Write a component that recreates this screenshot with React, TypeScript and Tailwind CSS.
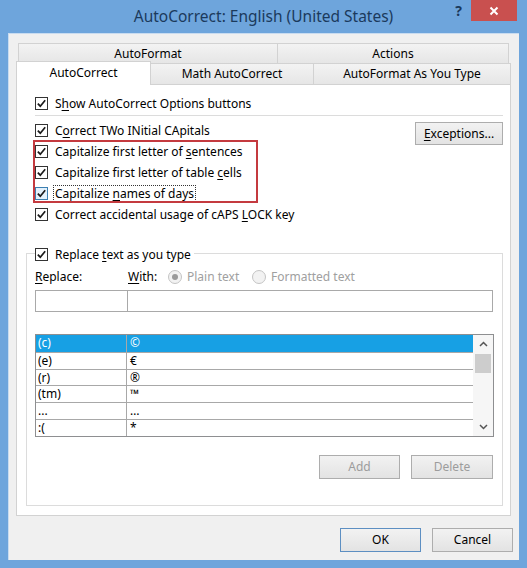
import type { ReactNode } from "react";

function Check({ hover = false }: { hover?: boolean }) {
  return (
    <span
      className={
        hover
          ? "flex h-[13px] w-[13px] shrink-0 items-center justify-center border border-[#3c7fb1] bg-[#e3f1fc]"
          : "flex h-[13px] w-[13px] shrink-0 items-center justify-center border border-[#333333] bg-white"
      }
    >
      <svg width="11" height="11" viewBox="0 0 11 11">
        <path d="M1.8 5.6 L4.3 8.2 L9.2 2.2" stroke="#1a1a1a" strokeWidth="1.7" fill="none" />
      </svg>
    </span>
  );
}

function Row({ children, hover = false }: { children: ReactNode; hover?: boolean }) {
  return (
    <div className="flex h-[21px] items-center gap-[7px]">
      <Check hover={hover} />
      <span className="leading-[16px]">{children}</span>
    </div>
  );
}

function Radio({ on = false }: { on?: boolean }) {
  return (
    <span className="flex h-[14px] w-[14px] shrink-0 items-center justify-center rounded-full border border-[#c4c4c4] bg-[#f2f2f2]">
      {on && <span className="h-[6px] w-[6px] rounded-full bg-[#9a9a9a]" />}
    </span>
  );
}

function Btn({
  children,
  w,
  disabled = false,
  primary = false,
}: {
  children: ReactNode;
  w: string;
  disabled?: boolean;
  primary?: boolean;
}) {
  return (
    <div
      className={[
        "flex items-center justify-center border bg-gradient-to-b from-[#f2f2f2] to-[#e3e3e3]",
        w,
        primary ? "border-[#5d8fc2]" : "border-[#adadad]",
        disabled ? "text-[#9c9c9c]" : "text-black",
      ].join(" ")}
    >
      {children}
    </div>
  );
}

const entries = [
  ["(c)", "©"],
  ["(e)", "€"],
  ["(r)", "®"],
  ["(tm)", "™"],
  ["...", "…"],
  [":(", "*"],
];

export default function App() {
  return (
    <div className="flex h-[568px] w-[527px] flex-col bg-[#6ea5dc] font-['Noto_Sans','Open_Sans',sans-serif] text-[12px] text-black">
      {/* title bar */}
      <div className="grid h-[33px] grid-cols-[1fr_auto_1fr]">
        <div />
        <div className="pt-[6px] text-[15.5px] leading-[21px] text-[#1b3a5c]">
          AutoCorrect: English (United States)
        </div>
        <div className="flex items-start justify-end pr-[10px]">
          <span className="mr-[9px] mt-[3px] text-[14px] font-bold leading-[16px] text-[#1b3a5c]">?</span>
          <div className="flex h-[21px] w-[46px] items-center justify-center bg-[#c9504f]">
            <svg width="10" height="10" viewBox="0 0 10 10">
              <path d="M1.5 1.5 L8.5 8.5 M8.5 1.5 L1.5 8.5" stroke="#fff" strokeWidth="2" />
            </svg>
          </div>
        </div>
      </div>

      {/* client area */}
      <div className="mx-[8px] flex h-[527px] flex-col bg-[#f0f0f0] px-[8px] pt-[10px] shadow-[inset_1px_1px_0_#c9dcf0]">
        {/* back tab row */}
        <div className="flex h-[20px] px-[2px]">
          <div className="flex w-[260px] items-center justify-center border border-b-0 border-[#d2d2d2] bg-gradient-to-b from-[#f3f3f3] to-[#e6e6e6]">
            AutoFormat
          </div>
          <div className="-ml-px flex flex-1 items-center justify-center border border-b-0 border-[#d2d2d2] bg-gradient-to-b from-[#f3f3f3] to-[#e6e6e6]">
            Actions
          </div>
        </div>
        {/* front tab row */}
        <div className="flex h-[21px] items-end">
          <div className="relative z-10 -mb-px flex h-[24px] w-[135px] items-center justify-center border border-b-0 border-[#d2d2d2] bg-white pb-[1px]">
            AutoCorrect
          </div>
          <div className="-ml-px flex h-[21px] w-[164px] items-center justify-center border border-b-0 border-[#d2d2d2] bg-gradient-to-b from-[#f3f3f3] to-[#e6e6e6]">
            Math AutoCorrect
          </div>
          <div className="-ml-px flex h-[21px] flex-1 items-center justify-center border border-b-0 border-[#d2d2d2] bg-gradient-to-b from-[#f3f3f3] to-[#e6e6e6]">
            AutoFormat As You Type
          </div>
        </div>

        {/* tab panel */}
        <div className="flex h-[432px] flex-col border border-[#d2d2d2] bg-white">
          <div className="pl-[18px] pt-[8px]">
            <Row>
              S<u className="underline-offset-2">h</u>ow AutoCorrect Options buttons
            </Row>
          </div>
          <div className="ml-[18px] mr-[7px] mt-[1px] h-px bg-[#dcdcdc]" />

          <div className="mt-[4px] flex pl-[18px] pr-[7px]">
            <div className="flex flex-1 flex-col">
              <Row>
                C<u className="underline-offset-2">o</u>rrect TWo INitial CApitals
              </Row>
              <div className="relative">
                <Row>
                  Capitalize first letter of <u className="underline-offset-2">s</u>entences
                </Row>
                <Row>
                  Capitalize first letter of table <u className="underline-offset-2">c</u>ells
                </Row>
                <div className="flex h-[21px] items-center gap-[5px]">
                  <Check hover />
                  <span className="border border-dotted border-[#333] px-[1px] leading-[15px]">
                    Capitalize <u className="underline-offset-2">n</u>ames of days
                  </span>
                </div>
                <div className="absolute -left-[2px] -top-px h-[63px] w-[225px] border-2 border-[#c43a3f]" />
              </div>
              <Row>
                Correct accidental usage of cAPS <u className="underline-offset-2">L</u>OCK key
              </Row>
            </div>
            <div className="mt-[2px] self-start">
              <Btn w="w-[88px] h-[23px]">
                <span>
                  <u className="underline-offset-2">E</u>xceptions...
                </span>
              </Btn>
            </div>
          </div>

          {/* replace group */}
          <div className="ml-[9px] mr-[7px] mt-[28px] flex h-[253px] flex-col border border-[#dcdcdc] pl-[8px] pr-[8px]">
            <div className="-mt-[10px] w-fit bg-white pr-[3px]">
              <Row>
                Replace <u className="underline-offset-2">t</u>ext as you type
              </Row>
            </div>
            <div className="mt-[3px] flex h-[17px] items-center">
              <span className="w-[93px]">
                <u className="underline-offset-2">R</u>eplace:
              </span>
              <span className="w-[40px]">
                <u className="underline-offset-2">W</u>ith:
              </span>
              <div className="flex w-[84px] items-center gap-[5px] text-[#a0a0a0]">
                <Radio on />
                <span>Plain text</span>
              </div>
              <div className="flex items-center gap-[5px] text-[#a0a0a0]">
                <Radio />
                <span>Formatted text</span>
              </div>
            </div>
            <div className="mt-[5px] flex h-[22px] pr-px">
              <div className="w-[93px] border border-[#a9a9a9] bg-white" />
              <div className="-ml-px flex-1 border border-[#a9a9a9] bg-white" />
            </div>

            {/* list */}
            <div className="mt-[22px] flex h-[103px] border border-[#8e8f91] bg-white">
              <div className="flex flex-1 flex-col">
                {entries.map(([from, to], i) => (
                  <div
                    key={from}
                    className={
                      i === 0
                        ? "flex h-[16.8px] items-center bg-[#17a0e4] text-white"
                        : "flex h-[16.8px] items-center border-t border-[#a8a8a8]"
                    }
                  >
                    <span className="flex h-full w-[91px] items-center border-r border-[#a8a8a8] pl-[2px]">{from}</span>
                    <span className="pl-[3px]">{to}</span>
                  </div>
                ))}
              </div>
              <div className="flex w-[20px] flex-col items-center bg-[#f6f6f6]">
                <svg className="mt-[6px]" width="9" height="6" viewBox="0 0 9 6">
                  <path d="M1 5 L4.5 1.5 L8 5" stroke="#555" strokeWidth="1.5" fill="none" />
                </svg>
                <div className="mt-[7px] h-[19px] w-[16px] bg-[#cdcdcd]" />
                <div className="flex-1" />
                <svg className="mb-[6px]" width="9" height="6" viewBox="0 0 9 6">
                  <path d="M1 1 L4.5 4.5 L8 1" stroke="#555" strokeWidth="1.5" fill="none" />
                </svg>
              </div>
            </div>

            <div className="mt-[18px] flex justify-end gap-[11px] pr-px">
              <Btn w="w-[81px] h-[24px]" disabled>
                Add
              </Btn>
              <Btn w="w-[82px] h-[24px]" disabled>
                Delete
              </Btn>
            </div>
          </div>
        </div>

        {/* dialog buttons */}
        <div className="-mr-[2px] mt-[12px] flex justify-end gap-[11px]">
          <Btn w="w-[81px] h-[24px]" primary>
            OK
          </Btn>
          <Btn w="w-[81px] h-[24px]">Cancel</Btn>
        </div>
      </div>
    </div>
  );
}
